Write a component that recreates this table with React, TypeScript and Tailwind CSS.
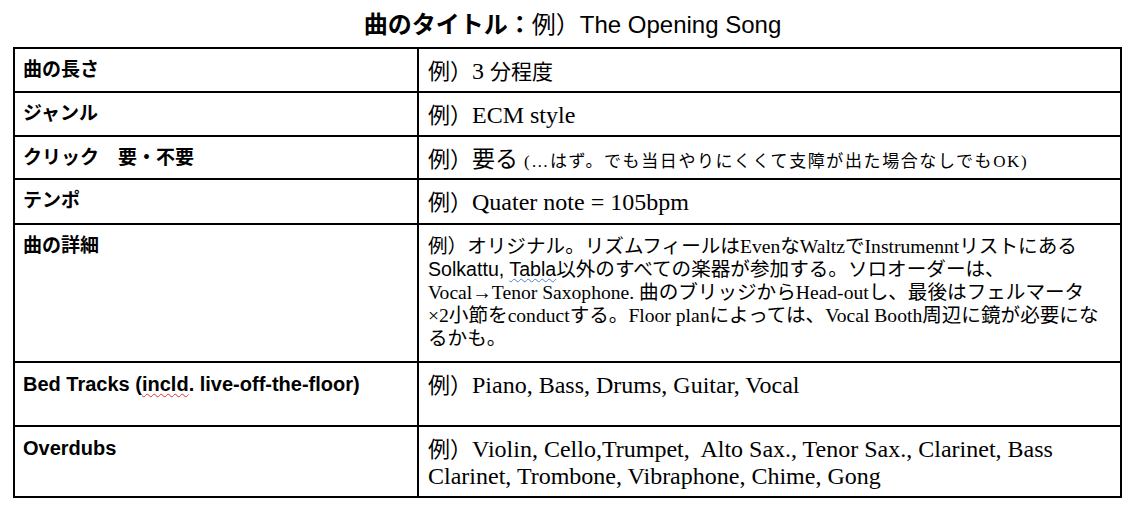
import React from 'react';

const sans = 'font-["Liberation_Sans","Noto_Sans_CJK_JP",sans-serif]';

const Ex = () => <span className='font-["Noto_Sans_CJK_JP",sans-serif] text-[22px]'>例）</span>;

interface RowProps {
  label: React.ReactNode;
  height: string;
  labelSize?: string;
  children: React.ReactNode;
}

const Row: React.FC<RowProps> = ({ label, height, labelSize = 'text-[19px]', children }) => (
  <tr className={height}>
    <td className={`border-2 border-black align-top pl-[8px] pt-[9px] font-bold leading-[24px] text-black ${labelSize} ${sans}`}>
      {label}
    </td>
    <td className='border-2 border-black align-top pl-[9px] pt-[7px] text-black font-["Liberation_Serif","Noto_Sans_CJK_JP",serif] text-[24px] leading-[27px]'>
      {children}
    </td>
  </tr>
);

export default function App() {
  return (
    <div className="w-[1145px] h-[511px] bg-white overflow-hidden">
      <h1 className={`h-[47px] flex items-center justify-center pt-[3px] text-[24px] text-black ${sans}`}>
        <span className="font-bold">曲のタイトル：</span>
        <span>例）The Opening Song</span>
      </h1>
      <table className="ml-[13px] w-[1109px] border-collapse table-fixed">
        <colgroup>
          <col className="w-[404px]" />
          <col />
        </colgroup>
        <tbody>
          <Row label="曲の長さ" height="h-[44px]">
            <Ex />3 <span className='font-["Noto_Sans_CJK_JP",sans-serif] text-[21px]'>分程度</span>
          </Row>
          <Row label="ジャンル" height="h-[44px]">
            <Ex />ECM style
          </Row>
          <Row label="クリック　要・不要" height="h-[43px]">
            <Ex />
            <span className='font-["Noto_Sans_CJK_JP",sans-serif] text-[23px]'>要る</span>
            <span className="text-[17px] tracking-[1.6px] ml-[6px]">(…はず。でも当日やりにくくて支障が出た場合なしでもOK)</span>
          </Row>
          <Row label="テンポ" height="h-[45px]">
            <Ex />Quater note = 105bpm
          </Row>
          <Row label="曲の詳細" height="h-[138px]">
            <div className="text-[19.6px] leading-[23px] pt-[3px]">
              例）オリジナル。リズムフィールはEvenなWaltzでInstrumenntリストにある<br />
              <span className={sans}>
                Solkattu,{' '}
                <span className="underline decoration-wavy decoration-[#4a7fd4] decoration-1 underline-offset-2">Tabla</span>
              </span>
              以外のすべての楽器が参加する。ソロオーダーは、<br />
              Vocal→Tenor Saxophone. 曲のブリッジからHead-outし、最後はフェルマータ<br />
              ×2小節をconductする。Floor planによっては、Vocal Booth周辺に鏡が必要にな<br />
              るかも。
            </div>
          </Row>
          <Row
            label={
              <>
                Bed Tracks (
                <span className="underline decoration-wavy decoration-[#d33] decoration-1 underline-offset-2">incld</span>
                . live-off-the-floor)
              </>
            }
            height="h-[64px]"
            labelSize="text-[20px]"
          >
            <Ex />Piano, Bass, Drums, Guitar, Vocal
          </Row>
          <Row label="Overdubs" height="h-[71px]" labelSize="text-[20px]">
            <Ex />Violin, Cello,Trumpet,&nbsp; Alto Sax., Tenor Sax., Clarinet, Bass
            <br />
            Clarinet, Trombone, Vibraphone, Chime, Gong
          </Row>
        </tbody>
      </table>
    </div>
  );
}
